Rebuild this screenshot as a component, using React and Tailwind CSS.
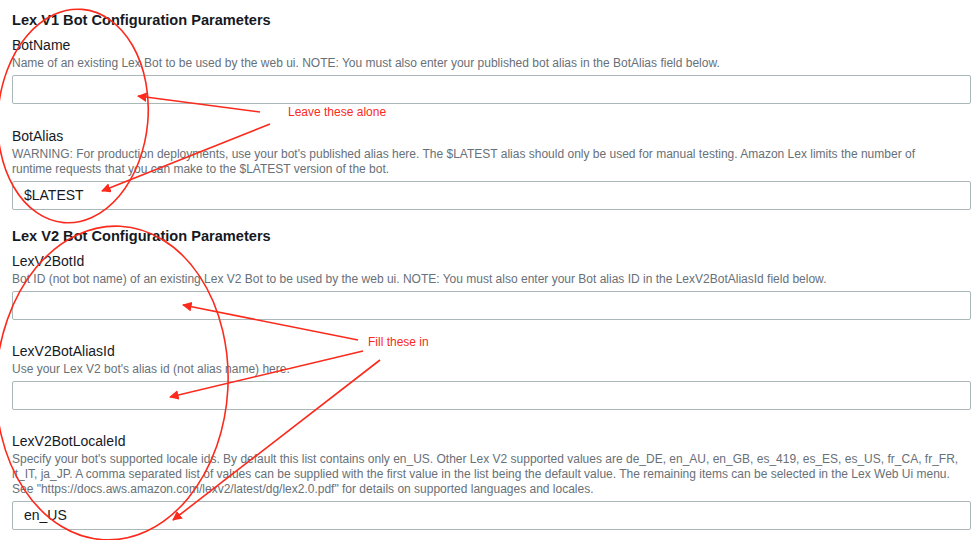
const font = { fontFamily: '"Liberation Sans", Arial, sans-serif' };

const Field = ({ label, lines, value, className = "mt-[21px]" }) => (
  <div className={className}>
    <div className="text-[14px] leading-[20px] text-[#16191f]">{label}</div>
    <div className="mt-[1px] text-[12px] leading-[15px] text-[#687078]">
      {lines.map((line, i) => (
        <div key={i} className="whitespace-nowrap">{line}</div>
      ))}
    </div>
    <div className="mt-[4px] h-[29px] border border-[#aab7b8] rounded-[2px] bg-white px-[11px] flex items-center text-[14px] text-[#16191f]">
      {value}
    </div>
  </div>
);

const Section = ({ title, children, className = "" }) => (
  <section className={className}>
    <h3 className="text-[14.6px] leading-[20px] font-bold text-[#16191f]">{title}</h3>
    <div>{children}</div>
  </section>
);

const Annotations = () => (
  <svg className="absolute inset-0 pointer-events-none" width="977" height="540" viewBox="0 0 977 540">
    <defs>
      <marker id="head" viewBox="0 0 10 10" refX="9" refY="5" markerWidth="6" markerHeight="6" orient="auto-start-reverse">
        <path d="M0 0 L10 5 L0 10 z" fill="#fc2a1c" />
      </marker>
    </defs>
    <g fill="none" stroke="#fc2a1c" strokeWidth="1.6">
      <ellipse cx="73" cy="116" rx="75" ry="107" transform="rotate(5 73 116)" />
      <ellipse cx="112" cy="383" rx="116" ry="157" transform="rotate(3 112 383)" />
      <line x1="260" y1="112" x2="138" y2="96" markerEnd="url(#head)" />
      <line x1="270" y1="124" x2="102" y2="191" markerEnd="url(#head)" />
      <line x1="358" y1="340" x2="183" y2="305" markerEnd="url(#head)" />
      <line x1="363" y1="351" x2="170" y2="397" markerEnd="url(#head)" />
      <line x1="380" y1="360" x2="173" y2="520" markerEnd="url(#head)" />
    </g>
  </svg>
);

export default function App() {
  return (
    <div className="relative w-[977px] h-[540px] overflow-hidden bg-white" style={font}>
      <div className="pl-[12px] pr-[6px] pt-[10px]">
        <Section title="Lex V1 Bot Configuration Parameters">
          <Field
            className="mt-[5px]"
            label="BotName"
            lines={["Name of an existing Lex Bot to be used by the web ui. NOTE: You must also enter your published bot alias in the BotAlias field below."]}
          />
          <Field
            className="mt-[22px]"
            label="BotAlias"
            lines={[
              "WARNING: For production deployments, use your bot's published alias here. The $LATEST alias should only be used for manual testing. Amazon Lex limits the number of",
              "runtime requests that you can make to the $LATEST version of the bot.",
            ]}
            value="$LATEST"
          />
        </Section>
        <Section title="Lex V2 Bot Configuration Parameters" className="mt-[16px]">
          <Field
            className="mt-[5px]"
            label="LexV2BotId"
            lines={["Bot ID (not bot name) of an existing Lex V2 Bot to be used by the web ui. NOTE: You must also enter your Bot alias ID in the LexV2BotAliasId field below."]}
          />
          <Field
            label="LexV2BotAliasId"
            lines={["Use your Lex V2 bot's alias id (not alias name) here."]}
          />
          <Field
            label="LexV2BotLocaleId"
            lines={[
              "Specify your bot's supported locale ids. By default this list contains only en_US. Other Lex V2 supported values are de_DE, en_AU, en_GB, es_419, es_ES, es_US, fr_CA, fr_FR,",
              "it_IT, ja_JP. A comma separated list of values can be supplied with the first value in the list being the default value. The remaining items can be selected in the Lex Web Ui menu.",
              'See "https://docs.aws.amazon.com/lexv2/latest/dg/lex2.0.pdf" for details on supported languages and locales.',
            ]}
            value="en_US"
          />
        </Section>
      </div>
      <Annotations />
      <span className="absolute left-[288px] top-[104px] text-[12px] leading-[16px] text-[#fc2a1c]">Leave these alone</span>
      <span className="absolute left-[368px] top-[334px] text-[12px] leading-[16px] text-[#fc2a1c]">Fill these in</span>
    </div>
  );
}
